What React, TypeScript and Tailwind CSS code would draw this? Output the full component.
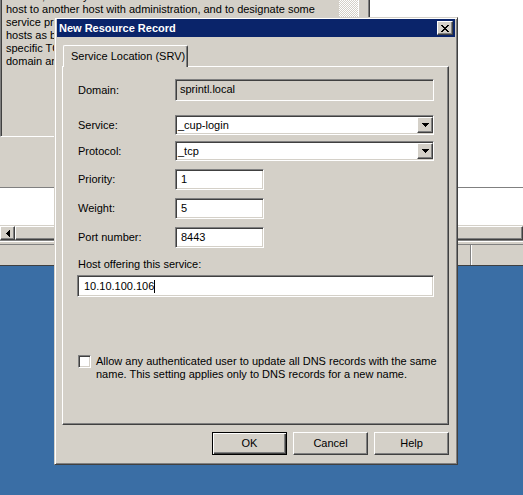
import React from 'react'

const sunken =
  'border border-t-[#808080] border-l-[#808080] border-r-white border-b-white shadow-[inset_1px_1px_#404040,inset_-1px_-1px_#d4d0c8]'
const raised =
  'border border-t-white border-l-white border-r-[#404040] border-b-[#404040] shadow-[inset_-1px_-1px_#808080,inset_1px_1px_#d4d0c8]'

const Label = ({ children }: { children: React.ReactNode }) => (
  <div className="w-[97px] shrink-0">{children}</div>
)

const Edit = ({ value, className = '' }: { value: string; className?: string }) => (
  <div className={`${sunken} bg-white flex items-center pl-[5px] ${className}`}>{value}</div>
)

const Combo = ({ value }: { value: string }) => (
  <div className={`${sunken} bg-white h-[20px] w-[259px] flex items-stretch pl-[2px] py-px`}>
    <span className="flex-1 flex items-center">{value}</span>
    <div className={`${raised} bg-[#d4d0c8] w-[16px] flex items-center justify-center`}>
      <svg width="7" height="4" viewBox="0 0 7 4" shapeRendering="crispEdges">
        <path d="M0 0h7v1H0z M1 1h5v1H1z M2 2h3v1H2z M3 3h1v1H3z" fill="#000" />
      </svg>
    </div>
  </div>
)

const Button = ({ label, isDefault }: { label: string; isDefault?: boolean }) => (
  <div
    className={
      isDefault
        ? 'w-[75px] h-[23px] flex items-center justify-center border border-black shadow-[inset_1px_1px_#ffffff,inset_-1px_-1px_#404040,inset_-2px_-2px_#808080]'
        : `w-[75px] h-[23px] flex items-center justify-center ${raised}`
    }
  >
    {label}
  </div>
)

export default function App() {
  return (
    <div className="relative w-[523px] h-[495px] overflow-hidden bg-[#3a6ea5] text-[11px] leading-[13px] text-black font-['Liberation_Sans',Arial,sans-serif]">
      {/* window behind the dialog */}
      <div className="flex flex-col">
        <div className="flex h-[187px]">
          <div className="w-[370px] bg-[#d4d0c8] border-r border-r-[#404040] shadow-[inset_-1px_0_#808080]">
            <div className="w-[359px] h-[137px] flex border-l border-b border-r border-l-[#808080] border-b-white border-r-white shadow-[inset_1px_0_#404040,inset_0_-1px_#d4d0c8,inset_-1px_0_#d4d0c8] overflow-hidden">
              <div className="flex-1 pl-[5px] -mt-[10px] whitespace-nowrap overflow-hidden">
                <div>domain, to easily move a TCP/IP service from one</div>
                <div>host to another host with administration, and to designate some</div>
                <div>service provider hosts as primary servers for a service and</div>
                <div>hosts as backups. DNS clients that use a SRV-type query can ask</div>
                <div>specific TCP/IP service and protocol mapped to a specific DNS</div>
                <div>domain and receive the names of any available servers.</div>
              </div>
              <div className="w-[19px] bg-[repeating-conic-gradient(#ffffff_0%_25%,#d4d0c8_0%_50%)] bg-[length:2px_2px]" />
            </div>
          </div>
          <div className="flex-1 bg-white" />
        </div>
        <div className="h-[39px] bg-white border-t border-t-[#808080] border-b border-b-[#d4d0c8]" />
        <div className="h-[14px] flex bg-[#d4d0c8]">
          <div className={`${raised} w-[15px] flex items-center justify-center`}>
            <svg width="4" height="7" viewBox="0 0 4 7" shapeRendering="crispEdges">
              <path d="M3 0h1v7H3z M2 1h1v5H2z M1 2h1v3H1z M0 3h1v1H0z" fill="#000" />
            </svg>
          </div>
          <div className={`${raised} flex-1`} />
        </div>
        <div className="h-[4px] bg-[#d4d0c8] border-t border-t-[#808080] shadow-[inset_0_1px_#ffffff]" />
        <div className="h-[21px] bg-[#d4d0c8] border-t border-t-[#808080] flex">
          <div className="w-[471px] border-r border-r-[#808080]" />
          <div className="flex-1 border-l border-l-white" />
        </div>
        <div className="h-px bg-[#404040]" />
      </div>

      {/* New Resource Record dialog */}
      <div className="absolute left-[54px] top-[17px] w-[404px] h-[448px] bg-[#d4d0c8] flex flex-col px-[2px] pt-px border border-t-[#d4d0c8] border-l-[#d4d0c8] border-r-[#404040] border-b-[#404040] shadow-[inset_1px_1px_#ffffff,inset_-1px_-1px_#808080]">
        <div className="h-[18px] bg-[#0a246a] flex items-center pl-[2px] pr-[2px]">
          <span className="flex-1 text-white font-bold text-[11px]">New Resource Record</span>
          <div className={`${raised} bg-[#d4d0c8] w-[16px] h-[14px] flex items-center justify-center`}>
            <svg width="8" height="7" viewBox="0 0 8 7" shapeRendering="crispEdges">
              <path
                d="M0 0h2v1H0z M6 0h2v1H6z M1 1h2v1H1z M5 1h2v1H5z M2 2h4v1H2z M3 3h2v1H3z M2 4h4v1H2z M1 5h2v1H1z M5 5h2v1H5z M0 6h2v1H0z M6 6h2v1H6z"
                fill="#000"
              />
            </svg>
          </div>
        </div>

        <div className="flex pl-[6px] mt-[8px]">
          <div className="relative z-10 -mb-px w-[125px] h-[22px] pl-[7px] pb-px bg-[#d4d0c8] flex items-center border-t border-l border-r border-t-white border-l-white border-r-[#404040] shadow-[inset_-1px_0_#808080] rounded-tl-[2px] rounded-tr-[2px]">
            Service Location (SRV)
          </div>
        </div>

        <div className="ml-[5px] w-[387px] h-[359px] flex flex-col pl-[15px] border border-t-white border-l-white border-r-[#404040] border-b-[#404040] shadow-[inset_-1px_-1px_#808080]">
          <div className="mt-[12px] flex items-center h-[22px]">
            <Label>Domain:</Label>
            <div className={`${sunken} !bg-[#d4d0c8] h-[22px] w-[259px] pl-[4px] pt-[3px]`}>sprintl.local</div>
          </div>
          <div className="mt-[14px] flex items-center">
            <Label>Service:</Label>
            <Combo value="_cup-login" />
          </div>
          <div className="mt-[6px] flex items-center">
            <Label>Protocol:</Label>
            <Combo value="_tcp" />
          </div>
          <div className="mt-[8px] flex items-center">
            <Label>Priority:</Label>
            <Edit value="1" className="h-[21px] w-[89px]" />
          </div>
          <div className="mt-[8px] flex items-center">
            <Label>Weight:</Label>
            <Edit value="5" className="h-[21px] w-[89px]" />
          </div>
          <div className="mt-[8px] flex items-center">
            <Label>Port number:</Label>
            <Edit value="8443" className="h-[21px] w-[89px]" />
          </div>
          <div className="mt-[10px]">Host offering this service:</div>
          <div className={`${sunken} bg-white mt-[4px] -ml-px h-[22px] w-[357px] flex items-center pl-[6px]`}>
            <span>10.10.100.106</span>
            <span className="w-px h-[13px] bg-black" />
          </div>
          <div className="mt-[58px] flex items-start gap-[5px]">
            <div className={`${sunken} bg-white w-[13px] h-[13px] shrink-0`} />
            <div className="whitespace-nowrap">
              Allow any authenticated user to update all DNS records with the same
              <br />
              name. This setting applies only to DNS records for a new name.
            </div>
          </div>
        </div>

        <div className="mt-[7px] flex justify-end gap-[6px] pr-[6px]">
          <Button label="OK" isDefault />
          <Button label="Cancel" />
          <Button label="Help" />
        </div>
      </div>
    </div>
  )
}
